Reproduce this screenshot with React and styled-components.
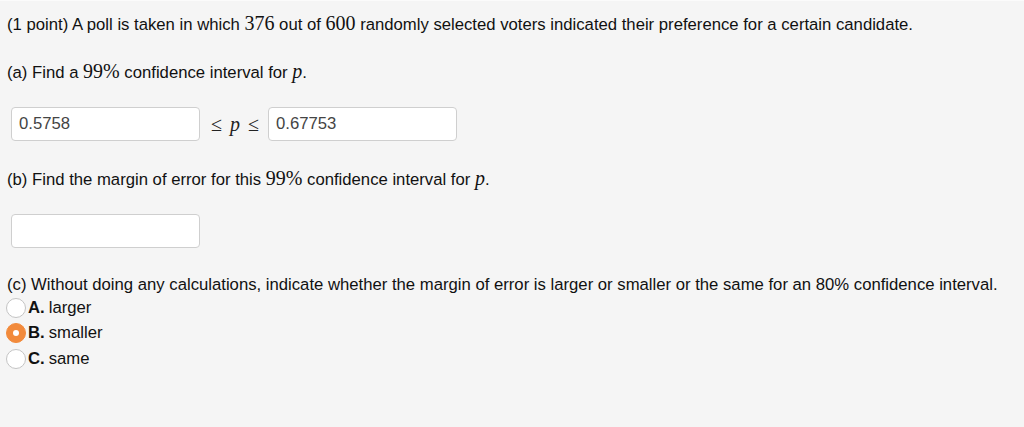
import React from 'react'
import styled, { createGlobalStyle } from 'styled-components'

const GlobalStyle = createGlobalStyle`
  html, body {
    margin: 0;
    padding: 0;
    background: #f5f5f5;
  }
  body {
    font-family: "Liberation Sans", Arial, sans-serif;
    font-size: 16.7px;
    color: #111;
  }
`

const Page = styled.div`
  width: 1024px;
  height: 427px;
  box-sizing: border-box;
  padding: 12px 7px 0;
  border-top: 1px solid #fbfbfb;
  background: #f5f5f5;
`

const Line = styled.div`
  line-height: 20px;
  height: 20px;
  margin-top: ${p => p.$gap || 0}px;
  white-space: nowrap;
`

const M = styled.span`
  font-family: "Liberation Serif", "Times New Roman", serif;
  font-size: 20px;
  font-style: ${p => (p.$italic ? 'italic' : 'normal')};
`

const Row = styled.div`
  display: flex;
  align-items: center;
  margin-top: 26px;
  padding-left: 4px;
`

const Field = styled.div`
  box-sizing: border-box;
  width: 189px;
  height: 34px;
  background: #fff;
  border: 1px solid #cfcfcf;
  border-radius: 4px;
  padding: 0 7px;
  display: flex;
  align-items: center;
  font-size: 16.7px;
  color: #444;
`

const Between = styled.span`
  font-family: "Liberation Serif", "Times New Roman", serif;
  font-size: 20px;
  color: #222;
  margin: 0 9px 0 11px;
  display: flex;
  gap: 8px;
  align-items: center;
  i { font-style: italic; }
`

const Choices = styled.div`
  display: flex;
  flex-direction: column;
  margin-left: -1px;
`

const Choice = styled.label`
  display: flex;
  align-items: center;
  height: 25.5px;
  gap: 2px;
  b { font-weight: bold; margin-right: 4px; }
`

const Radio = styled.span`
  box-sizing: border-box;
  width: 20px;
  height: 20px;
  border-radius: 50%;
  flex: none;
  display: flex;
  align-items: center;
  justify-content: center;
  background: ${p => (p.$on ? '#f28a3b' : '#fff')};
  border: 1px solid ${p => (p.$on ? '#f28a3b' : '#c4c4c4')};
  &::after {
    content: '';
    display: ${p => (p.$on ? 'block' : 'none')};
    width: 6px;
    height: 6px;
    border-radius: 50%;
    background: #fff;
  }
`

const choices = [
  { key: 'A', text: 'larger' },
  { key: 'B', text: 'smaller', on: true },
  { key: 'C', text: 'same' },
]

export default function App() {
  return (
    <Page>
      <GlobalStyle />
      <Line>
        (1 point) A poll is taken in which <M>376</M> out of <M>600</M> randomly selected voters indicated their preference for a certain candidate.
      </Line>
      <Line $gap={28}>
        (a) Find a <M>99%</M> confidence interval for <M $italic>p</M>.
      </Line>
      <Row>
        <Field>0.5758</Field>
        <Between>
          <span>≤</span><i>p</i><span>≤</span>
        </Between>
        <Field>0.67753</Field>
      </Row>
      <Line $gap={27}>
        (b) Find the margin of error for this <M>99%</M> confidence interval for <M $italic>p</M>.
      </Line>
      <Row>
        <Field />
      </Row>
      <Line $gap={27}>
        (c) Without doing any calculations, indicate whether the margin of error is larger or smaller or the same for an 80% confidence interval.
      </Line>
      <Choices>
        {choices.map(c => (
          <Choice key={c.key}>
            <Radio $on={c.on} />
            <span><b>{c.key}.</b>{c.text}</span>
          </Choice>
        ))}
      </Choices>
    </Page>
  )
}
